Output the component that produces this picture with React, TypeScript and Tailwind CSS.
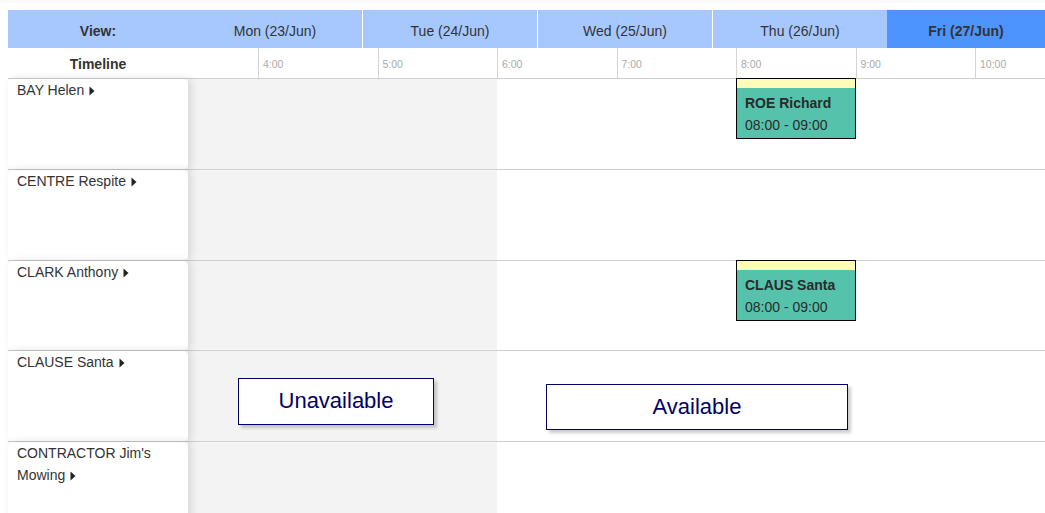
import React from "react";

const Tri = () => (
  <svg width="6" height="10" viewBox="0 0 6 10" className="inline-block ml-[5px] align-[-1px]">
    <path d="M0.5 0.5 L5.5 5 L0.5 9.5 Z" fill="#222" />
  </svg>
);

function NameCell({ children }: { children: React.ReactNode }) {
  return (
    <div className="relative z-10 w-[180px] shrink-0 h-full bg-white rounded-[5px] shadow-[3px_0_8px_rgba(0,0,0,0.12)] pl-[9px] pr-2 text-[14px] leading-[22px] text-[#333]">
      {children}
    </div>
  );
}

function Event({ name, top }: { name: string; top: number }) {
  return (
    <div className="absolute left-[548px] w-[120px] h-[61px] border border-black bg-[#55c2ab] z-20" style={{ top }}>
      <div className="h-[9px] bg-[#fffbb9]" />
      <div className="pl-[8px] pt-[4px] text-[14px] leading-[22px] text-[#2b2b2b]">
        <div className="font-bold">{name}</div>
        <div>08:00 - 09:00</div>
      </div>
    </div>
  );
}

function Row({ h, children, overlay }: { h: string; children: React.ReactNode; overlay?: React.ReactNode }) {
  return (
    <div className={`flex border-b border-[#cfcfcf] ${h}`}>
      <NameCell>{children}</NameCell>
      <div className="relative flex-1 h-full">
        <div className="absolute left-0 top-0 w-[309px] h-full bg-[#f3f3f3]" />
        {overlay}
      </div>
    </div>
  );
}

export default function App() {
  const hours = ["4:00", "5:00", "6:00", "7:00", "8:00", "9:00"];
  return (
    <div className="w-[1045px] h-[513px] overflow-hidden bg-white font-['Liberation_Sans',Arial,sans-serif] text-[#333]">
      <div className="h-[3px] bg-[#f8f9fa]" />
      <div className="pl-2 pt-[7px]">
        {/* header */}
        <div className="flex h-[38px] text-[14px] leading-[20px]">
          <div className="w-[180px] shrink-0 bg-[#a6c8ff] flex items-center justify-center pt-[3px] font-bold">View:</div>
          <div className="w-[175px] shrink-0 bg-[#a6c8ff] border-r border-white flex items-center justify-center pt-[3px]">Mon (23/Jun)</div>
          <div className="w-[175px] shrink-0 bg-[#a6c8ff] border-r border-white flex items-center justify-center pt-[3px]">Tue (24/Jun)</div>
          <div className="w-[175px] shrink-0 bg-[#a6c8ff] border-r border-white flex items-center justify-center pt-[3px]">Wed (25/Jun)</div>
          <div className="w-[174px] shrink-0 bg-[#a6c8ff] flex items-center justify-center pt-[3px]">Thu (26/Jun)</div>
          <div className="flex-1 bg-[#4d94ff] flex items-center justify-center pt-[3px] font-bold">Fri (27/Jun)</div>
        </div>
        {/* timeline */}
        <div className="flex h-[31px] border-b border-[#cfcfcf]">
          <div className="w-[180px] shrink-0 flex items-center justify-center pt-[3px] font-bold text-[14px]">Timeline</div>
          <div className="w-[70px] shrink-0" />
          {hours.map((h) => (
            <div key={h} className="w-[119.5px] shrink-0 border-l border-[#d4d4d4] pl-[4px] pt-[10px] text-[10.5px] leading-[12px] text-[#aaa]">
              {h}
            </div>
          ))}
          <div className="flex-1 border-l border-[#d4d4d4] pl-[4px] pt-[10px] text-[10.5px] leading-[12px] text-[#aaa]">10:00</div>
        </div>
        {/* rows */}
        <Row h="h-[91px]" overlay={<Event name="ROE Richard" top={-1} />}>
          BAY Helen<Tri />
        </Row>
        <Row h="h-[91px]">
          CENTRE Respite<Tri />
        </Row>
        <Row h="h-[90px]" overlay={<Event name="CLAUS Santa" top={-1} />}>
          CLARK Anthony<Tri />
        </Row>
        <Row
          h="h-[91px]"
          overlay={
            <>
              <div className="absolute left-[50px] top-[27px] w-[196px] h-[47px] border border-[#000066] bg-white shadow-[3px_3px_3px_rgba(0,0,0,0.2)] flex items-center justify-center pb-[3px] text-[22px] text-[#000066]">
                Unavailable
              </div>
              <div className="absolute left-[358px] top-[33px] w-[302px] h-[46px] border border-[#000066] bg-white shadow-[3px_3px_3px_rgba(0,0,0,0.2)] flex items-center justify-center pb-[1px] text-[22px] text-[#000066]">
                Available
              </div>
            </>
          }
        >
          CLAUSE Santa<Tri />
        </Row>
        <Row h="h-[91px]">
          CONTRACTOR Jim's
          <br />
          Mowing<Tri />
        </Row>
      </div>
    </div>
  );
}
